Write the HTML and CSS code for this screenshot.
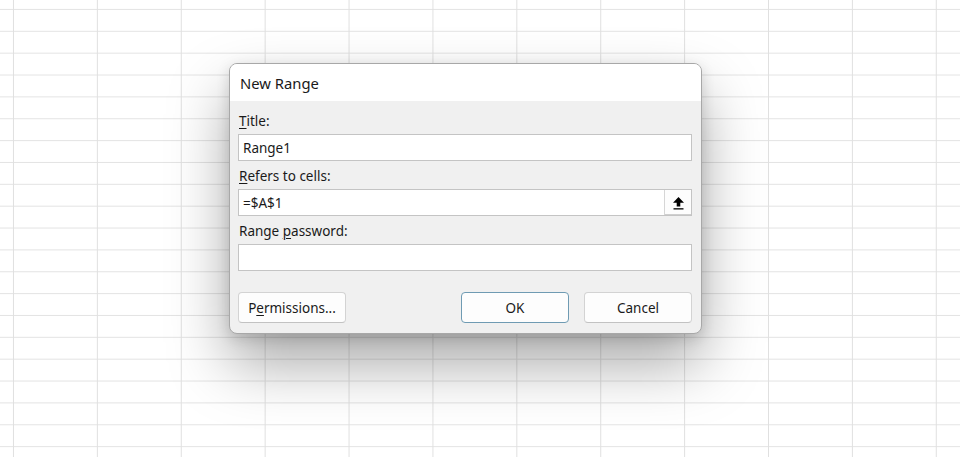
FILE: index.html
```html
<!DOCTYPE html>
<html>
<head>
<meta charset="utf-8">
<link rel="stylesheet" href="styles.css">
</head>
<body>
<div class="sheet">
  <div class="dialog">
    <div class="titlebar">New Range</div>
    <div class="content">
      <label class="label first"><u>T</u>itle:</label>
      <div class="field"><span class="value">Range1</span></div>
      <label class="label"><u>R</u>efers to cells:</label>
      <div class="field with-btn">
        <span class="value">=$A$1</span>
        <span class="pick">
          <svg width="13" height="14" viewBox="0 0 13 14"><path d="M6.5 1 L12 6.8 L8.3 6.8 L8.3 10.5 L4.7 10.5 L4.7 6.8 L1 6.8 Z" fill="#000"/><rect x="1.5" y="12.2" width="10" height="1.3" fill="#000"/></svg>
        </span>
      </div>
      <label class="label">Range <u>p</u>assword:</label>
      <div class="field"></div>
      <div class="buttons">
        <button class="btn">P<u>e</u>rmissions...</button>
        <div class="spacer"></div>
        <button class="btn primary">OK</button>
        <button class="btn">Cancel</button>
      </div>
    </div>
  </div>
</div>
</body>
</html>
```
FILE: styles.css
```css
html, body {
  margin: 0;
  padding: 0;
}
body {
  width: 960px;
  height: 457px;
  overflow: hidden;
  background: #fff;
  font-family: "Noto Sans", "Open Sans", sans-serif;
}
.sheet {
  position: relative;
  width: 960px;
  height: 457px;
  background-color: #fff;
  background-image:
    repeating-linear-gradient(to right, transparent 0, transparent 13px, #e0e0e0 13px, #e0e0e0 14px, transparent 14px, transparent 83.9px),
    repeating-linear-gradient(to bottom, transparent 0, transparent 9px, #e3e3e3 9px, #e3e3e3 10px, transparent 10px, transparent 21.86px);
  background-size: 83.9px 100%, 100% 21.86px;
  background-position: 0 0, 0 0;
}
.dialog {
  position: absolute;
  left: 229px;
  top: 63px;
  width: 471px;
  height: 269px;
  border: 1px solid #a8a8a8;
  border-radius: 8px;
  background: #f0f0f0;
  overflow: hidden;
  box-shadow: 0 30px 60px rgba(0,0,0,0.34), 0 4px 14px rgba(0,0,0,0.14);
  display: flex;
  flex-direction: column;
}
.titlebar {
  height: 37px;
  background: #fff;
  font-size: 14.8px;
  color: #1a1a1a;
  padding-left: 10px;
  display: flex;
  align-items: center;
  padding-top: 1px;
  box-sizing: border-box;
}
.content {
  flex: 1;
  padding: 12px 9px 0 8px;
  display: flex;
  flex-direction: column;
}
.label {
  display: block;
  font-size: 13.5px;
  line-height: 17px;
  color: #1a1a1a;
  margin: 7px 0 4px 1px;
}
.label.first {
  margin-top: 0;
}
.label u, .btn u {
  text-decoration: underline;
  text-underline-offset: 2px;
}
.field {
  height: 27px;
  box-sizing: border-box;
  background: #fff;
  border: 1px solid #c4c4c4;
  display: flex;
  align-items: center;
  padding-left: 4px;
  font-size: 13.5px;
  color: #1a1a1a;
}
.field .value {
  flex: 1;
}
.pick {
  width: 27px;
  height: 25px;
  box-sizing: border-box;
  border-left: 1px solid #d6d6d6;
  background: #fdfdfd;
  display: flex;
  align-items: center;
  justify-content: center;
  box-shadow: inset 0 -1px 0 #cfcfcf;
}
.buttons {
  display: flex;
  margin-top: 21px;
  gap: 15px;
}
.spacer {
  flex: 1;
}
.btn {
  width: 108px;
  height: 31px;
  box-sizing: border-box;
  border: 1px solid #d3d3d3;
  border-bottom-color: #c2c2c2;
  border-radius: 4px;
  background: #fdfdfd;
  font-family: inherit;
  font-size: 13.5px;
  color: #1a1a1a;
  padding: 0;
}
.btn.primary {
  border: 1px solid #6f9bb3;
  background: #fdfdfd;
}
```
